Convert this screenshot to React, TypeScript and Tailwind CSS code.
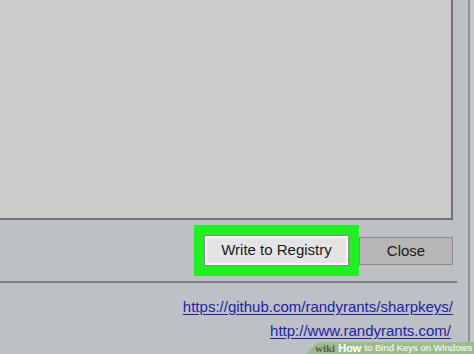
import React from "react";

export default function App() {
  return (
    <div
      className="relative w-[474px] h-[354px] overflow-hidden bg-[#bdc0c5] flex"
      style={{ fontFamily: '"Liberation Sans", Arial, sans-serif' }}
    >
      <div className="w-[470px] flex flex-col border-r-2 border-[#8d9196]">
        <div className="w-[453px] h-[220px] bg-[#cbcbcb] border-r-2 border-b-2 border-[#6f7276]" />
        <div className="w-[453px] h-[61px] flex justify-end items-start pt-[5px]">
          <div className="p-[10px] bg-[#22ef22]">
            <div className="w-[145px] h-[31px] border border-[#8a8a8a] bg-[#e4e4e4] flex items-center justify-center shadow-[inset_0_0_0_2px_#f4f4f4] text-[15px] text-[#1a1a1a]">
              Write to Registry
            </div>
          </div>
          <div className="mt-[12px] w-[94px] h-[28px] border border-[#8c8c8c] bg-[#b6b6b6] flex items-center justify-center text-[15px] text-[#1a1a1a]">
            Close
          </div>
        </div>
        <div className="w-[457px] h-[2px] bg-[#7d8084]" />
        <div className="w-[453px] pt-[12px] flex flex-col items-end text-[15px] leading-[24px] text-[#2222a8]">
          <span className="underline underline-offset-2">https://github.com/randyrants/sharpkeys/</span>
          <span className="underline underline-offset-2 pr-[2px]">http://www.randyrants.com/</span>
        </div>
      </div>
      <div className="flex-1 bg-[#c3c6cb]" />
      <div className="absolute right-0 bottom-0 w-[168px] h-[12px] bg-[#9dbc8e] [clip-path:polygon(12px_0,100%_0,100%_100%,0_100%)] flex items-center pl-[9px] whitespace-nowrap overflow-hidden">
        <span
          className="text-[11px] font-bold text-[#55624a] leading-none"
          style={{ fontFamily: '"Liberation Serif", serif' }}
        >
          wiki
        </span>
        <span className="ml-[3px] text-[11px] font-bold text-white leading-none">How</span>
        <span className="ml-[3px] text-[9.5px] text-white leading-none">to Bind Keys on Windows</span>
      </div>
    </div>
  );
}
